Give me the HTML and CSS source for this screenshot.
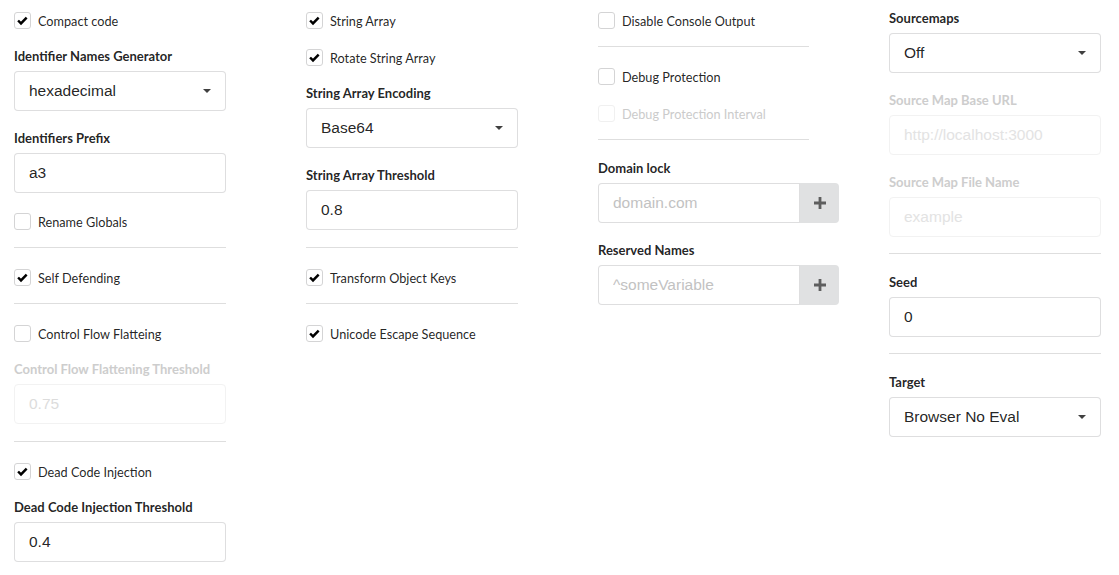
FILE: index.html
```html
<!DOCTYPE html>
<html lang="en">

<head>
    <meta charset="UTF-8">
    <title>Obfuscator Options</title>
    <link rel="stylesheet" href="styles.css">
</head>

<body>
    <div class="options">
        <div class="col">
            <label class="check"><span class="box"><svg viewBox="0 0 17 17"><polyline points="3.5,8.5 6.8,11.8 13.2,5.2" /></svg></span>Compact code</label>
            <div class="field">
                <div class="label">Identifier Names Generator</div>
                <div class="select">hexadecimal<span class="caret"></span></div>
            </div>
            <div class="field">
                <div class="label">Identifiers Prefix</div>
                <input class="input" type="text" value="a3">
            </div>
            <label class="check"><span class="box"></span>Rename Globals</label>
            <div class="divider"></div>
            <label class="check"><span class="box"><svg viewBox="0 0 17 17"><polyline points="3.5,8.5 6.8,11.8 13.2,5.2" /></svg></span>Self Defending</label>
            <div class="divider"></div>
            <label class="check"><span class="box"></span>Control Flow Flatteing</label>
            <div class="field disabled">
                <div class="label">Control Flow Flattening Threshold</div>
                <input class="input" type="text" value="0.75" disabled>
            </div>
            <div class="divider"></div>
            <label class="check"><span class="box"><svg viewBox="0 0 17 17"><polyline points="3.5,8.5 6.8,11.8 13.2,5.2" /></svg></span>Dead Code Injection</label>
            <div class="field">
                <div class="label">Dead Code Injection Threshold</div>
                <input class="input" type="text" value="0.4">
            </div>
        </div>

        <div class="col">
            <label class="check"><span class="box"><svg viewBox="0 0 17 17"><polyline points="3.5,8.5 6.8,11.8 13.2,5.2" /></svg></span>String Array</label>
            <label class="check"><span class="box"><svg viewBox="0 0 17 17"><polyline points="3.5,8.5 6.8,11.8 13.2,5.2" /></svg></span>Rotate String Array</label>
            <div class="field">
                <div class="label">String Array Encoding</div>
                <div class="select">Base64<span class="caret"></span></div>
            </div>
            <div class="field">
                <div class="label">String Array Threshold</div>
                <input class="input" type="text" value="0.8">
            </div>
            <div class="divider"></div>
            <label class="check"><span class="box"><svg viewBox="0 0 17 17"><polyline points="3.5,8.5 6.8,11.8 13.2,5.2" /></svg></span>Transform Object Keys</label>
            <div class="divider"></div>
            <label class="check"><span class="box"><svg viewBox="0 0 17 17"><polyline points="3.5,8.5 6.8,11.8 13.2,5.2" /></svg></span>Unicode Escape Sequence</label>
        </div>

        <div class="col col-narrow">
            <label class="check"><span class="box"></span>Disable Console Output</label>
            <div class="divider"></div>
            <label class="check"><span class="box"></span>Debug Protection</label>
            <label class="check disabled"><span class="box"></span>Debug Protection Interval</label>
            <div class="divider"></div>
            <div class="field">
                <div class="label">Domain lock</div>
                <div class="input-group">
                    <input class="input" type="text" placeholder="domain.com">
                    <button class="add-button"><svg viewBox="0 0 12 12"><path d="M4.6 0h2.8v4.6H12v2.8H7.4V12H4.6V7.4H0V4.6h4.6z" /></svg></button>
                </div>
            </div>
            <div class="field">
                <div class="label">Reserved Names</div>
                <div class="input-group">
                    <input class="input" type="text" placeholder="^someVariable">
                    <button class="add-button"><svg viewBox="0 0 12 12"><path d="M4.6 0h2.8v4.6H12v2.8H7.4V12H4.6V7.4H0V4.6h4.6z" /></svg></button>
                </div>
            </div>
        </div>

        <div class="col col-last">
            <div class="field">
                <div class="label">Sourcemaps</div>
                <div class="select">Off<span class="caret"></span></div>
            </div>
            <div class="field disabled">
                <div class="label">Source Map Base URL</div>
                <input class="input" type="text" placeholder="http://localhost:3000" disabled>
            </div>
            <div class="field disabled">
                <div class="label">Source Map File Name</div>
                <input class="input" type="text" placeholder="example" disabled>
            </div>
            <div class="divider"></div>
            <div class="field">
                <div class="label">Seed</div>
                <input class="input" type="text" value="0">
            </div>
            <div class="divider"></div>
            <div class="field">
                <div class="label">Target</div>
                <div class="select">Browser No Eval<span class="caret"></span></div>
            </div>
        </div>
    </div>
</body>

</html>
```

FILE: styles.css
```css
body {
    margin: 0;
    font-family: Lato, "Helvetica Neue", Arial, sans-serif;
    color: rgba(0, 0, 0, 0.87);
    background-color: #fff;
}

.options {
    display: flex;
    align-items: flex-start;
    gap: 80px;
    padding: 12px 0 0 14px;
}

.col {
    width: 212px;
    display: flex;
    flex-direction: column;
}

.col-narrow {
    width: 211px;
}

.col-last {
    margin-top: -1px;
}

/* checkboxes */

.check {
    display: flex;
    align-items: center;
    gap: 7px;
    height: 17px;
    font-size: 12.7px;
    margin-bottom: 20px;
    white-space: nowrap;
}

.box {
    box-sizing: border-box;
    width: 17px;
    height: 17px;
    border: 1px solid #d4d4d5;
    border-radius: 3px;
    background-color: #fff;
    flex-shrink: 0;
}

.box svg {
    display: block;
    width: 15px;
    height: 15px;
}

.box polyline {
    fill: none;
    stroke: #000;
    stroke-width: 2.8;
}

.check.disabled {
    color: #cbcbcb;
}

.check.disabled .box {
    border-color: #f0f0f0;
}

/* fields */

.field {
    margin-bottom: 20px;
}

.label {
    font-size: 13px;
    font-weight: 700;
    line-height: 15px;
    margin-bottom: 7px;
    white-space: nowrap;
}

.field.disabled .label {
    color: #cdcdcd;
}

.input,
.select {
    box-sizing: border-box;
    display: block;
    width: 100%;
    height: 40px;
    margin: 0;
    padding: 0 14px;
    border: 1px solid rgba(34, 36, 38, 0.15);
    border-radius: 4px;
    background-color: #fff;
    font-family: "Liberation Sans", Arial, sans-serif;
    font-size: 15.5px;
    color: rgba(0, 0, 0, 0.87);
    outline: none;
}

.input::placeholder {
    color: #c2c2c2;
}

.input:disabled {
    border-color: #f2f2f2;
    color: #dcdcdc;
}

.input:disabled::placeholder {
    color: #e3e3e3;
}

.select {
    display: flex;
    align-items: center;
    justify-content: space-between;
}

.caret {
    width: 0;
    height: 0;
    border-left: 4px solid transparent;
    border-right: 4px solid transparent;
    border-top: 4px solid rgba(0, 0, 0, 0.75);
}

.input-group {
    display: flex;
    width: 241px;
}

.input-group .input {
    width: 202px;
    border-radius: 4px 0 0 4px;
}

.add-button {
    width: 39px;
    height: 40px;
    padding: 0;
    border: none;
    border-radius: 0 4px 4px 0;
    background-color: #e0e1e2;
    display: flex;
    align-items: center;
    justify-content: center;
}

.add-button svg {
    width: 12px;
    height: 12px;
    fill: #5e5e5e;
}

.divider {
    height: 1px;
    background-color: #dedede;
    margin: -3px 0 21px;
}

.col-last .divider {
    margin-top: -4px;
}
```
